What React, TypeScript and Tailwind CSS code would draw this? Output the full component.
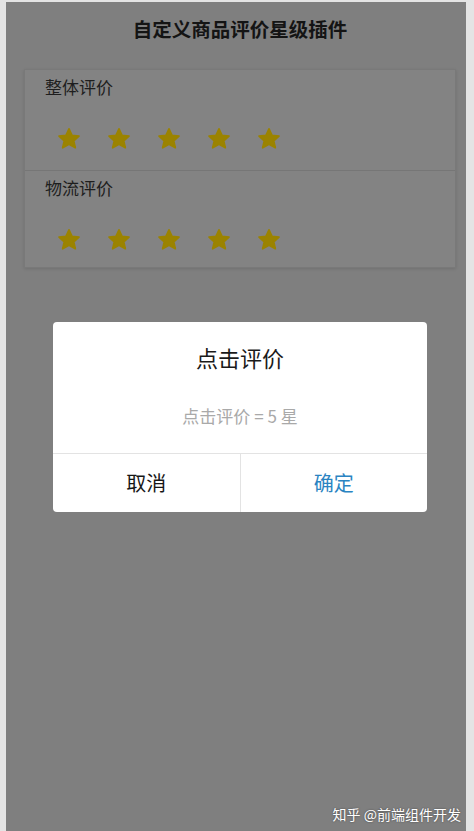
import { useState } from 'react'

const FONT = '"Noto Sans CJK SC", "Noto Sans", sans-serif'

function Star({ on }: { on: boolean }) {
    return (
        <svg width="26" height="26" viewBox="0 0 24 24">
            <path
                d="M12 2.6l2.8 6 6.4.7-4.8 4.4 1.4 6.4L12 16.9l-5.8 3.2 1.4-6.4L2.8 9.3l6.4-.7z"
                fill={on ? '#9b8300' : '#9a9a9a'}
                stroke={on ? '#9b8300' : '#9a9a9a'}
                strokeWidth="1.6"
                strokeLinejoin="round"
            />
        </svg>
    )
}

function RateRow({ label, value, onPick, top, bottom, last }: {
    label: string
    value: number
    onPick: (n: number) => void
    top: string
    bottom: string
    last?: boolean
}) {
    return (
        <div className={`${top} ${bottom} pl-[20px] ${last ? '' : 'border-b border-[#767676]'}`}>
            <p className="text-[17px] leading-[24px] text-[#1e1e1e]">{label}</p>
            <div className="flex gap-[24px] pl-[11px] mt-[27px]">
                {[1, 2, 3, 4, 5].map(n => (
                    <button key={n} type="button" onClick={() => onPick(n)} className="w-[26px] h-[26px]">
                        <Star on={n <= value} />
                    </button>
                ))}
            </div>
        </div>
    )
}

export default function App() {
    const [overall, setOverall] = useState(5)
    const [delivery, setDelivery] = useState(5)
    const [open, setOpen] = useState(true)

    return (
        <div className="relative flex h-[831px] w-[474px] bg-[#e4e4e4] overflow-hidden" style={{ fontFamily: FONT }}>
            <div className="w-[6px]" />
            <div className="flex-1 mt-[2px] bg-[#7f7f7f] flex flex-col">
                <h1 className="pl-[8px] pt-[14px] text-center text-[19.5px] leading-[26px] font-bold text-[#141414]">
                    自定义商品评价星级插件
                </h1>
                <div className="mt-[27px] ml-[18px] mr-[10px] bg-[#838383] border border-[#797979] shadow-[0_1px_3px_rgba(0,0,0,0.12)]">
                    <RateRow label="整体评价" value={overall} onPick={setOverall} top="pt-[5px]" bottom="pb-[18px]" />
                    <RateRow label="物流评价" value={delivery} onPick={setDelivery} top="pt-[5px]" bottom="pb-[14px]" last />
                </div>
            </div>
            <div className="w-[8px]" />

            {open && (
                <div className="absolute left-[53px] top-[322px] w-[374px] bg-white rounded-[4px] overflow-hidden">
                    <div className="h-[131px] flex flex-col items-center">
                        <p className="mt-[21px] text-[22px] leading-[28px] text-[#1a1a1a]">点击评价</p>
                        <p className="mt-[33px] text-[17px] leading-[24px] text-[#a9a9a9]">点击评价 = 5 星</p>
                    </div>
                    <div className="flex h-[59px] border-t border-[#e3e3e3]">
                        <button type="button" onClick={() => setOpen(false)} className="flex-1 text-[20px] text-[#161616]">
                            取消
                        </button>
                        <button type="button" onClick={() => setOpen(false)} className="flex-1 border-l border-[#e3e3e3] text-[20px] text-[#2a84c2]">
                            确定
                        </button>
                    </div>
                </div>
            )}

            <p className="absolute right-[13px] top-[803px] text-[14px] leading-[22px] text-white [text-shadow:0_0_2px_rgba(0,0,0,0.5)]">
                知乎 @前端组件开发
            </p>
        </div>
    )
}
